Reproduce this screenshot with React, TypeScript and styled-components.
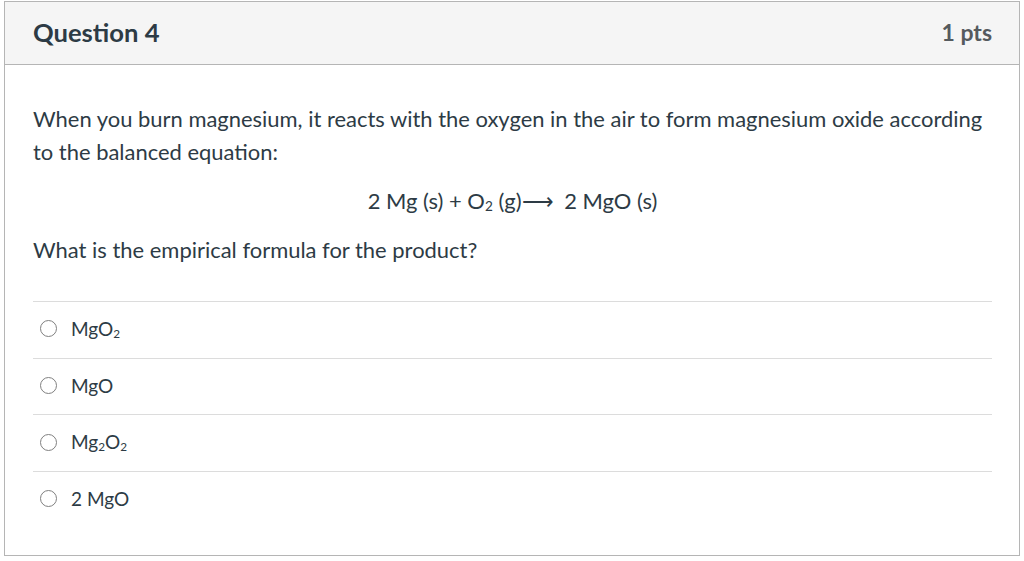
import React from "react";
import styled, { createGlobalStyle } from "styled-components";

const GlobalStyle = createGlobalStyle`
  html, body {
    margin: 0;
    padding: 0;
    background: #ffffff;
  }
  body {
    font-family: Lato, "Liberation Sans", sans-serif;
    color: #2d3b45;
  }
`;

const Page = styled.div`
  padding: 1px 4px 0 4px;
  width: 1024px;
  box-sizing: border-box;
`;

const QuestionCard = styled.div`
  border: 1px solid #b5b5b5;
  height: 555px;
  box-sizing: border-box;
  display: flex;
  flex-direction: column;
`;

const Header = styled.div`
  display: flex;
  justify-content: space-between;
  align-items: center;
  height: 62px;
  padding: 0 27px 0 28px;
  background: #f5f5f5;
  border-bottom: 1px solid #b5b5b5;
`;

const Title = styled.h2`
  margin: 0 0 3px 0;
  font-size: 25.6px;
  font-weight: 700;
  color: #2d3b45;
`;

const Points = styled.span`
  margin-bottom: 3px;
  font-size: 23px;
  font-weight: 700;
  color: #555a5e;
`;

const Body = styled.div`
  padding: 37px 27px 0 28px;
  font-size: 21.95px;
  line-height: 33px;
`;

const Paragraph = styled.p`
  margin: 0 0 16px 0;
`;

const Equation = styled.p`
  margin: 0 0 16px 0;
  text-align: center;
`;

const Sub = styled.sub`
  font-size: 0.62em;
  line-height: 0;
  vertical-align: -0.18em;
`;

const Arrow = styled.span`
  display: inline-block;
  margin-right: 5px;
`;

const Answers = styled.div`
  margin-top: 35px;
`;

const AnswerRow = styled.label`
  display: flex;
  align-items: center;
  gap: 14px;
  height: 56.7px;
  box-sizing: border-box;
  padding: 0 0 3px 7px;
  border-top: 1px solid #dcdcdc;
  font-size: 19px;
`;

const Radio = styled.span`
  flex-shrink: 0;
  width: 17px;
  height: 17px;
  margin-top: 1px;
  border-radius: 50%;
  border: 1.6px solid #808080;
  box-sizing: border-box;
  background: #fff;
`;

const answers: React.ReactNode[] = [
  <>MgO<Sub>2</Sub></>,
  <>MgO</>,
  <>Mg<Sub>2</Sub>O<Sub>2</Sub></>,
  <>2 MgO</>,
];

export default function App() {
  return (
    <>
      <GlobalStyle />
      <Page>
        <QuestionCard>
          <Header>
            <Title>Question 4</Title>
            <Points>1 pts</Points>
          </Header>
          <Body>
            <Paragraph>
              When you burn magnesium, it reacts with the oxygen in the air to form magnesium oxide according to the balanced equation:
            </Paragraph>
            <Equation>
              2 Mg (s) + O<Sub>2</Sub> (g)<Arrow>⟶</Arrow> 2 MgO (s)
            </Equation>
            <Paragraph>What is the empirical formula for the product?</Paragraph>
            <Answers>
              {answers.map((a, i) => (
                <AnswerRow key={i}>
                  <Radio />
                  <span>{a}</span>
                </AnswerRow>
              ))}
            </Answers>
          </Body>
        </QuestionCard>
      </Page>
    </>
  );
}
